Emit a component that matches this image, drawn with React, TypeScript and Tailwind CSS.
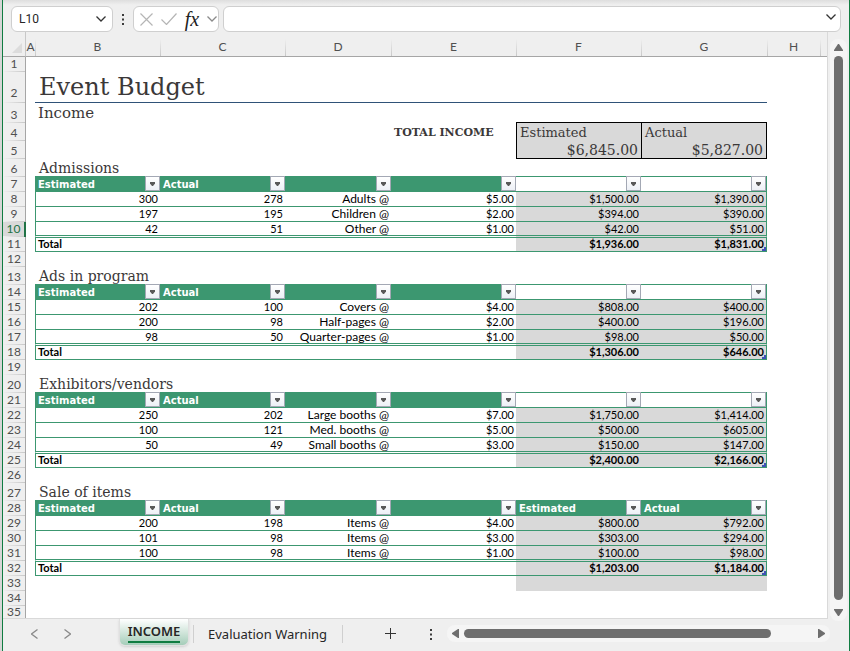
import * as React from "react";
import clsx from "clsx";

type Line = { est: string; act: string; label: string; price: string; estTotal: string; actTotal: string };
type Block = { title: string; start: number; showTotals?: boolean; lines: Line[]; est: string; act: string };

const line = (est: string, act: string, label: string, price: string, estTotal: string, actTotal: string): Line => ({
  est, act, label, price, estTotal, actTotal,
});

const BLOCKS: Block[] = [
  {
    title: "Admissions",
    start: 6,
    lines: [
      line("300", "278", "Adults @", "$5.00", "$1,500.00", "$1,390.00"),
      line("197", "195", "Children @", "$2.00", "$394.00", "$390.00"),
      line("42", "51", "Other @", "$1.00", "$42.00", "$51.00"),
    ],
    est: "$1,936.00",
    act: "$1,831.00",
  },
  {
    title: "Ads in program",
    start: 13,
    lines: [
      line("202", "100", "Covers @", "$4.00", "$808.00", "$400.00"),
      line("200", "98", "Half-pages @", "$2.00", "$400.00", "$196.00"),
      line("98", "50", "Quarter-pages @", "$1.00", "$98.00", "$50.00"),
    ],
    est: "$1,306.00",
    act: "$646.00",
  },
  {
    title: "Exhibitors/vendors",
    start: 20,
    lines: [
      line("250", "202", "Large booths @", "$7.00", "$1,750.00", "$1,414.00"),
      line("100", "121", "Med. booths @", "$5.00", "$500.00", "$605.00"),
      line("50", "49", "Small booths @", "$3.00", "$150.00", "$147.00"),
    ],
    est: "$2,400.00",
    act: "$2,166.00",
  },
  {
    title: "Sale of items",
    start: 27,
    showTotals: true,
    lines: [
      line("200", "198", "Items @", "$4.00", "$800.00", "$792.00"),
      line("101", "98", "Items @", "$3.00", "$303.00", "$294.00"),
      line("100", "98", "Items @", "$1.00", "$100.00", "$98.00"),
    ],
    est: "$1,203.00",
    act: "$1,184.00",
  },
];

const SERIF = "font-['DejaVu_Serif',serif] text-[#3b3838]";

function Chevron({ className }: { className?: string }) {
  return (
    <svg viewBox="0 0 10 6" className={clsx("w-[10px] h-[6px]", className)} fill="none" stroke="currentColor" aria-hidden>
      <path d="M.5.5 5 5 9.5.5" strokeWidth="1.3" />
    </svg>
  );
}

function Dots() {
  return (
    <svg viewBox="0 0 2 11" className="w-[2px] h-[11px]" fill="#3b3b3b" aria-hidden>
      <path d="M0 0h2v2H0zM0 4.5h2v2H0zM0 9h2v2H0z" />
    </svg>
  );
}

/* Row number cell plus the row itself */
function Row({ n, h = "h-[15px]", children }: { n: number; h?: string; children?: React.ReactNode }) {
  const active = n === 10;
  return (
    <tr className={h}>
      <th
        scope="row"
        className={clsx(
          "p-0 font-normal text-center align-bottom text-[12px] bg-[linear-gradient(to_right,#efefef,#c8c8c8)] bg-bottom bg-no-repeat bg-[length:100%_1px]",
          n === 2 ? "leading-[12px] pb-1" : "leading-[12px] pb-0.5",
          active ? "bg-[#d9d9d9] text-[#217346] border-r-2 border-[#217346]" : "bg-[#efefef] text-[#505050] border-r border-[#a6a6a6]",
        )}
      >
        {n}
      </th>
      {children}
    </tr>
  );
}

function FilterHead({ label, filled, column, last }: { label: string; filled: boolean; column: string; last?: boolean }) {
  return (
    <th
      scope="col"
      className={clsx(
        "p-0 border-b border-[#3c9770]",
        filled && "bg-[#3c9770]",
        column === "B" && "border-l",
        last && "border-r",
      )}
    >
      <div className="flex items-center justify-between h-[14px]">
        <span
          className={clsx(
            "pt-px text-white text-[10px] leading-[14px] font-bold font-['DejaVu_Sans',sans-serif]",
            column === "B" ? "pl-0.5" : "pl-[3px]",
          )}
        >
          {label}
        </span>
        <button
          type="button"
          aria-label={`Filter column ${column}`}
          className="size-[15px] -mt-px shrink-0 flex items-center justify-center border border-[#a3a8b4] bg-linear-to-b from-white to-[#edf0f6]"
        >
          <svg viewBox="0 0 5 4" className="w-[5px] h-[4px]" fill="#595959" aria-hidden>
            <path d="M0 0h5v1.5L3 4H2L0 1.5z" />
          </svg>
        </button>
      </div>
    </th>
  );
}

function BudgetBlock({ block }: { block: Block }) {
  const { start, lines } = block;
  return (
    <>
      <Row n={start} h="h-[18px]">
        <td />
        <td colSpan={6} className={clsx("p-0 pt-0.5 pl-1 border-b border-[#3c9770] text-[14px] leading-[15px]", SERIF)}>
          {block.title}
        </td>
        <td />
        <td />
      </Row>
      <Row n={start + 1}>
        <td />
        <FilterHead column="B" label="Estimated" filled />
        <FilterHead column="C" label="Actual" filled />
        <FilterHead column="D" label="" filled />
        <FilterHead column="E" label="" filled />
        <FilterHead column="F" label={block.showTotals ? "Estimated" : ""} filled={!!block.showTotals} />
        <FilterHead column="G" label={block.showTotals ? "Actual" : ""} filled={!!block.showTotals} last />
        <td />
        <td />
      </Row>
      {lines.map((l, i) => {
        // the last line sits on the double rule above the total
        const cell = clsx(
          "p-0 pr-0.5 text-right border-[#3c9770] border-b",
          i === lines.length - 1 && "border-b-transparent shadow-[inset_0_-1px_0_#3c9770]",
        );
        return (
          <Row key={i} n={start + 2 + i}>
            <td />
            <td className={clsx(cell, "border-l")}>{l.est}</td>
            <td className={cell}>{l.act}</td>
            <td className={clsx(cell, "text-[12px]")}>{l.label}</td>
            <td className={cell}>{l.price}</td>
            <td className={clsx(cell, "bg-[#d9d9d9]")}>{l.estTotal}</td>
            <td className={clsx(cell, "bg-[#d9d9d9] border-r")}>{l.actTotal}</td>
            <td />
            <td />
          </Row>
        );
      })}
      <Row n={start + 5}>
        <td />
        <td colSpan={4} className="p-0 pl-0.5 font-bold border-l border-b border-[#3c9770] shadow-[inset_0_1px_0_#3c9770]">
          Total
        </td>
        <td className="p-0 pr-0.5 text-right font-bold bg-[#d9d9d9] border-b border-[#3c9770] shadow-[inset_0_1px_0_#3c9770]">
          {block.est}
        </td>
        <td className="relative p-0 pr-0.5 text-right font-bold bg-[#d9d9d9] border-b border-r border-[#3c9770] shadow-[inset_0_1px_0_#3c9770]">
          {block.act}
          <svg viewBox="0 0 4 4" className="absolute right-0 bottom-0 size-1" fill="#3f51b5" aria-hidden>
            <path d="M2 0h2v4H0V2h2z" />
          </svg>
        </td>
        <td />
        <td />
      </Row>
      {start < 27 && <Row n={start + 6} />}
    </>
  );
}

function FormulaBar() {
  return (
    <div className="flex items-start h-8 pt-1.5 pl-2 pr-2 bg-linear-to-b from-[#dedede] to-[#efefef] to-15%">
      <div className="flex items-center w-[102px] h-[26px] pl-[7px] pr-1.5 bg-white border border-[#cfcfcf] rounded-md">
        <input
          aria-label="Name box"
          defaultValue="L10"
          className="min-w-0 flex-1 text-[12px] text-[#262626] outline-none font-['Roboto',sans-serif]"
        />
        <button type="button" aria-label="Show names" className="text-[#333]">
          <Chevron />
        </button>
      </div>
      <div className="flex items-center justify-center w-5 h-[26px]">
        <Dots />
      </div>
      <div className="flex items-center justify-between w-[86px] h-[26px] pl-1.5 pr-px bg-white border border-[#cfcfcf] rounded-md">
        <button type="button" aria-label="Cancel" className="text-[#b5b5b5]">
          <svg viewBox="0 0 13 13" className="size-[13px]" fill="none" stroke="currentColor" aria-hidden>
            <path d="m.5.5 12 12M12.500.5l-12 12" strokeWidth="1.2" />
          </svg>
        </button>
        <button type="button" aria-label="Enter" className="text-[#b5b5b5]">
          <svg viewBox="0 0 16 12" className="w-4 h-3" fill="none" stroke="currentColor" aria-hidden>
            <path d="m.5 6.500 5 5L15.500.5" strokeWidth="1.2" />
          </svg>
        </button>
        <button
          type="button"
          aria-label="Insert function"
          className="text-[20px] leading-[20px] italic text-[#222] font-['Liberation_Serif',serif]"
        >
          fx
        </button>
        <button type="button" aria-label="Recent functions" className="text-[#8a8a8a]">
          <Chevron />
        </button>
      </div>
      <div className="flex flex-1 items-center h-[26px] ml-1 pl-2 pr-1 bg-white border border-[#cfcfcf] rounded-md">
        <input aria-label="Formula" className="min-w-0 flex-1 text-[12px] outline-none" />
        <button type="button" aria-label="Expand formula bar" className="pb-1 text-[#333]">
          <Chevron />
        </button>
      </div>
    </div>
  );
}

function Sheet() {
  const head =
    "p-0 pt-1.5 font-normal bg-[linear-gradient(to_bottom,#efefef,#c8c8c8)] bg-no-repeat bg-[length:1px_17px] bg-[position:left_bottom] border-b border-[#a6a6a6]";
  return (
    <div className="flex-1 min-w-0 overflow-hidden bg-white border-r border-b border-[#d9d9d9]">
      <table className="w-full table-fixed border-separate border-spacing-0 text-[11px] leading-[14px] text-black font-['Lato',sans-serif]">
        <colgroup>
          <col className="w-[23px]" />
          <col className="w-[9px]" />
          <col className="w-[125px]" />
          <col className="w-[125px]" />
          <col className="w-[106px]" />
          <col className="w-[125px]" />
          <col className="w-[125px]" />
          <col className="w-[126px]" />
          <col className="w-[53px]" />
          <col />
        </colgroup>
        <thead>
          <tr className="h-[25px] bg-[#efefef] text-[12px] text-[#505050]">
            <td className="p-0 pl-[9px] pt-2 border-r border-b border-[#a6a6a6] border-r-[#c8c8c8]">
              <svg viewBox="0 0 10 10" className="size-[10px]" fill="#dcdcdc" aria-hidden>
                <path d="M10 0v10H0z" />
              </svg>
            </td>
            <th scope="col" className="p-0 pt-1.5 font-normal border-b border-[#a6a6a6]">A</th>
            {["B", "C", "D", "E", "F", "G", "H"].map((c) => (
              <th key={c} scope="col" className={head}>{c}</th>
            ))}
            <td className={head} />
          </tr>
        </thead>
        <tbody>
          <Row n={1} />
          <Row n={2} h="h-[31px]">
            <td />
            <td colSpan={6} className={clsx("p-0 pl-1 border-b border-[#2f5278] text-[24px] leading-[30px]", SERIF)}>
              <h1>Event Budget</h1>
            </td>
          </Row>
          <Row n={3} h="h-[20px]">
            <td />
            <td colSpan={4} className={clsx("p-0 pl-[3px] text-[15px] leading-[20px]", SERIF)}>Income</td>
            <td colSpan={2} className="p-0 border-b border-black" />
          </Row>
          <Row n={4} h="h-[18px]">
            <td />
            <td colSpan={3} />
            <td className={clsx("p-0 pt-0.5 pl-[3px] text-[11px] font-bold leading-[16px]", SERIF)}>TOTAL INCOME</td>
            <td className={clsx("p-0 pt-0.5 pl-[3px] text-[13px] leading-[16px] bg-[#d9d9d9] border-l border-black", SERIF)}>Estimated</td>
            <td className={clsx("p-0 pt-0.5 pl-[3px] text-[13px] leading-[16px] bg-[#d9d9d9] border-x border-black", SERIF)}>Actual</td>
          </Row>
          <Row n={5} h="h-[18px]">
            <td />
            <td colSpan={4} />
            <td className={clsx("p-0 pt-0.5 pr-[3px] text-right text-[14px] leading-[15px] bg-[#d9d9d9] border-l border-b border-black", SERIF)}>
              $6,845.00
            </td>
            <td className={clsx("p-0 pt-0.5 pr-[3px] text-right text-[14px] leading-[15px] bg-[#d9d9d9] border-x border-b border-black", SERIF)}>
              $5,827.00
            </td>
          </Row>
          {BLOCKS.map((b) => (
            <BudgetBlock key={b.title} block={b} />
          ))}
          <Row n={33}>
            <td />
            <td colSpan={4} />
            <td colSpan={2} className="bg-[#d9d9d9]" />
          </Row>
          <Row n={34} />
          <Row n={35} h="h-3" />
        </tbody>
      </table>
    </div>
  );
}

function VerticalScroll() {
  return (
    <div className="shrink-0 w-[21px] pt-[7px] pl-0.5 -mb-0.5">
      <div className="flex flex-col items-center w-[17px] h-full py-[5px] rounded-lg bg-[#f5f5f5] text-[#6e6e6e]">
        <button type="button" aria-label="Scroll up">
          <svg viewBox="0 0 9 7" className="w-[9px] h-[7px]" fill="currentColor" aria-hidden>
            <path d="M4 0h1l4 6v1H0V6z" />
          </svg>
        </button>
        <div className="flex-1 w-[9px] mt-[5px] mb-[9px] rounded-full bg-[#6e6e6e]" />
        <button type="button" aria-label="Scroll down">
          <svg viewBox="0 0 9 7" className="w-[9px] h-[7px]" fill="currentColor" aria-hidden>
            <path d="M4 7h1l4-6V0H0v1z" />
          </svg>
        </button>
      </div>
    </div>
  );
}

function SheetTabs() {
  return (
    <div className="flex items-start h-8 pr-[19px] font-['Noto_Sans',sans-serif] text-[13px] text-[#262626]">
      <div className="flex items-center gap-[26px] w-[116px] h-[29px] pl-7 text-[#8a8a8a]">
        <button type="button" aria-label="Previous sheet">
          <svg viewBox="0 0 7 10" className="w-[7px] h-[10px]" fill="none" stroke="currentColor" aria-hidden>
            <path d="M6.500.5.5 5l6 4.500" strokeWidth="1.3" />
          </svg>
        </button>
        <button type="button" aria-label="Next sheet">
          <svg viewBox="0 0 7 10" className="w-[7px] h-[10px]" fill="none" stroke="currentColor" aria-hidden>
            <path d="m.5.5 6 4.500-6 4.500" strokeWidth="1.3" />
          </svg>
        </button>
      </div>
      <button
        type="button"
        className="flex flex-col items-center w-[70px] h-[27px] pt-px rounded-b-md border-x border-b border-[#e0e0e0] bg-linear-to-b from-white to-[#a5cdb9] font-semibold shadow-sm"
      >
        <span className="h-[23px] leading-[22px] border-b-2 border-[#107c41]">INCOME</span>
      </button>
      <div className="w-px h-[18px] mt-1.5 ml-1 bg-[#cfcfcf]" />
      <button type="button" className="h-[31px] pl-[14px] pr-[15px] whitespace-nowrap">Evaluation Warning</button>
      <div className="w-px h-[18px] mt-1.5 bg-[#cfcfcf]" />
      <button type="button" aria-label="New sheet" className="flex items-center justify-center w-[95px] h-[29px]">
        <svg viewBox="0 0 11 11" className="size-[11px]" fill="none" stroke="#333" aria-hidden>
          <path d="M5.500 0v11M0 5.500h11" />
        </svg>
      </button>
      <div className="flex items-center h-[31px] mr-[15px] -ml-2">
        <Dots />
      </div>
      <div className="flex flex-1 items-center h-[17px] mt-1.5 px-[5px] rounded-lg bg-[#f5f5f5] text-[#6e6e6e]">
        <button type="button" aria-label="Scroll left">
          <svg viewBox="0 0 7 9" className="w-[7px] h-[9px]" fill="currentColor" aria-hidden>
            <path d="M0 4v1l6 4h1V0H6z" />
          </svg>
        </button>
        <div className="flex-1 h-[9px] ml-[5px] mr-[47px] rounded-full bg-[#6e6e6e]" />
        <button type="button" aria-label="Scroll right">
          <svg viewBox="0 0 7 9" className="w-[7px] h-[9px]" fill="currentColor" aria-hidden>
            <path d="M7 4v1L1 9H0V0h1z" />
          </svg>
        </button>
      </div>
    </div>
  );
}

export default function App() {
  return (
    <div className="flex h-screen overflow-hidden bg-[#d6d6d6] pl-0.5">
      <main className="flex flex-1 flex-col min-w-0 bg-[#efefef] border-x border-[#107c41]">
        <FormulaBar />
        <div className="flex flex-1 min-h-0">
          <Sheet />
          <VerticalScroll />
        </div>
        <SheetTabs />
      </main>
    </div>
  );
}
